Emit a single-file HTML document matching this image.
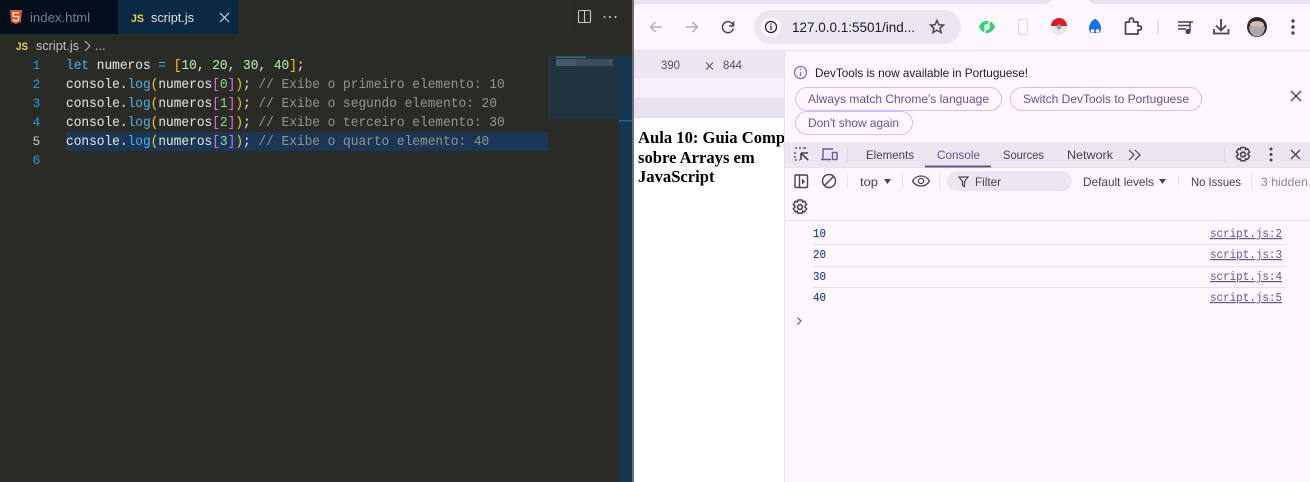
<!DOCTYPE html>
<html><head><meta charset="utf-8"><style>
html,body{margin:0;padding:0;width:1310px;height:482px;overflow:hidden;background:#fff}
svg{display:block}
.m{font-family:"Liberation Mono",monospace;font-size:13.8px}
.s{font-family:"Liberation Sans",sans-serif}
.w{fill:#dedfd9;stroke:#dedfd9;stroke-width:.08}.b{fill:#4fa8e8;stroke:#4fa8e8;stroke-width:.08}.n{fill:#b5e8a8;stroke:#b5e8a8;stroke-width:.08}.y{fill:#f2c40f;stroke:#f2c40f;stroke-width:.08}.p{fill:#d86fd8;stroke:#d86fd8;stroke-width:.08}.c{fill:#90908a;stroke:#90908a;stroke-width:.08}.g{fill:#7fd88f;stroke:#7fd88f;stroke-width:.08}
.t{font-family:"Liberation Sans",sans-serif;font-size:12px;fill:#45424c}
.pu{font-family:"Liberation Sans",sans-serif;font-size:12px;fill:#65558f}
.cm{font-family:"Liberation Mono",monospace;font-size:12px;fill:#1a3fb0;stroke:#1a3fb0;stroke-width:.15}
.ln{font-family:"Liberation Mono",monospace;font-size:12px;fill:#65558f;text-decoration:underline}
</style></head><body>
<svg width="1310" height="482" viewBox="0 0 1310 482" xmlns="http://www.w3.org/2000/svg">
<!-- VS Code -->
<rect width="633" height="482" fill="#2a2b24"/>
<rect width="118" height="34" fill="#010e1c"/>
<rect x="118" width="120" height="34" fill="#0b2942"/>
<rect x="568" y="0" width="1" height="34" fill="#1f3238"/>
<rect x="0" y="54.500" width="633" height="1" fill="#1f3238"/>
<path d="M10 10h12l-1.100 12-4.900 2-4.900-2z" fill="#e5532d"/>
<path d="M19 12.800h-6l.3 3.700h5.400l-.4 3.800-2.300.8-2.300-.8-.1-1.300" fill="none" stroke="#fff" stroke-width="1.200"/>
<text x="30" y="22" class="s" font-size="13" fill="#6d8296" textLength="60" lengthAdjust="spacingAndGlyphs">index.html</text>
<text x="131" y="22" class="s" font-size="11" font-weight="700" fill="#e8d44d" textLength="13" lengthAdjust="spacingAndGlyphs">JS</text>
<text x="151" y="22" class="s" font-size="13" fill="#dfe3e6" textLength="43" lengthAdjust="spacingAndGlyphs">script.js</text>
<path d="M220 13l9 9M229 13l-9 9" stroke="#cdd3d8" stroke-width="1.200"/>
<text x="16" y="50" class="s" font-size="11" font-weight="700" fill="#e8d44d" textLength="12" lengthAdjust="spacingAndGlyphs">JS</text>
<text x="36" y="50" class="s" font-size="12.500" fill="#c0c2bd" textLength="43" lengthAdjust="spacingAndGlyphs">script.js</text>
<path d="M85 41l5 5-5 5" fill="none" stroke="#c0c2bd" stroke-width="1"/>
<text x="95" y="50" class="s" font-size="12.500" fill="#c0c2bd">...</text>
<!-- actions -->
<rect x="578.500" y="10.500" width="12" height="12" rx="1" fill="none" stroke="#c9c9c4" stroke-width="1.100"/>
<path d="M584.500 10v13" stroke="#c9c9c4" stroke-width="1.100"/>
<circle cx="604.500" cy="17" r="1" fill="#c9c9c4"/><circle cx="610" cy="17" r="1" fill="#c9c9c4"/><circle cx="615.500" cy="17" r="1" fill="#c9c9c4"/>
<!-- minimap -->
<rect x="548" y="56" width="71" height="63" fill="#20333f"/>
<rect x="619" y="56" width="13" height="426" fill="#153650"/>
<rect x="619" y="120" width="13" height="1.500" fill="#1a6a9a"/>
<rect x="556" y="56.500" width="30" height="1.500" fill="#3f6f7c"/>
<rect x="556" y="59" width="57" height="7" fill="#3f4f5a"/>
<rect x="556" y="59" width="20" height="7" fill="#465c70"/>
<!-- highlight -->
<rect x="66" y="132" width="482" height="19" fill="#1a3654"/>
<!-- line nums -->
<g class="m" fill="#1e9ed8" style="font-size:13px">
<text x="32.500" y="69">1</text>
<text x="32.500" y="88">2</text>
<text x="32.500" y="107">3</text>
<text x="32.500" y="126">4</text>
<text x="32.500" y="145" fill="#c9ccc7">5</text>
<text x="32.500" y="164">6</text>
</g>
<!-- code -->
<g transform="translate(66 0) scale(.93 1)">
<text x="0" y="69" class="m"><tspan class="b">let</tspan><tspan class="w"> numeros </tspan><tspan class="b">=</tspan><tspan class="w"> </tspan><tspan class="y">[</tspan><tspan class="n">10</tspan><tspan class="w">, </tspan><tspan class="n">20</tspan><tspan class="w">, </tspan><tspan class="n">30</tspan><tspan class="w">, </tspan><tspan class="n">40</tspan><tspan class="y">]</tspan><tspan class="w">;</tspan></text>
<text x="0" y="88" class="m"><tspan class="w">console.</tspan><tspan class="b">log</tspan><tspan class="y">(</tspan><tspan class="w">numeros</tspan><tspan class="p">[</tspan><tspan class="g">0</tspan><tspan class="p">]</tspan><tspan class="y">)</tspan><tspan class="w">;</tspan><tspan class="c"> // Exibe o primeiro elemento: 10</tspan></text>
<text x="0" y="107" class="m"><tspan class="w">console.</tspan><tspan class="b">log</tspan><tspan class="y">(</tspan><tspan class="w">numeros</tspan><tspan class="p">[</tspan><tspan class="g">1</tspan><tspan class="p">]</tspan><tspan class="y">)</tspan><tspan class="w">;</tspan><tspan class="c"> // Exibe o segundo elemento: 20</tspan></text>
<text x="0" y="126" class="m"><tspan class="w">console.</tspan><tspan class="b">log</tspan><tspan class="y">(</tspan><tspan class="w">numeros</tspan><tspan class="p">[</tspan><tspan class="g">2</tspan><tspan class="p">]</tspan><tspan class="y">)</tspan><tspan class="w">;</tspan><tspan class="c"> // Exibe o terceiro elemento: 30</tspan></text>
<text x="0" y="145" class="m"><tspan class="w">console.</tspan><tspan class="b">log</tspan><tspan class="y">(</tspan><tspan class="w">numeros</tspan><tspan class="p">[</tspan><tspan class="g">3</tspan><tspan class="p">]</tspan><tspan class="y">)</tspan><tspan class="w">;</tspan><tspan class="c"> // Exibe o quarto elemento: 40</tspan></text>
</g>
<!-- divider -->
<rect x="632" width="2" height="482" fill="#6e6e6e"/>
<!-- Chrome frame -->
<rect x="634" width="676" height="482" fill="#e9e0f6"/>
<path d="M634 10a6 6 0 0 1 6-6H1310V51H634z" fill="#fdf7ff"/>
<path d="M1045 4c4 0 5-4 9-4h32c4 0 5 4 9 4z" fill="#fdf7ff"/>
<rect x="634" y="50" width="676" height="1" fill="#e4e0e8"/>
<path d="M662 27h-11.500M655.500 22L650.500 27l5 5" fill="none" stroke="#b3aeb8" stroke-width="1.500"/>
<path d="M686 27h11.500M692.500 22L697.500 27l-5 5" fill="none" stroke="#b3aeb8" stroke-width="1.500"/>
<path d="M733 25a5.500 5.500 0 1 0 .3 3.500M733.500 21.500v4.500h-4.500" fill="none" stroke="#49454f" stroke-width="1.500"/>
<rect x="754" y="10" width="207" height="34" rx="17" fill="#ece6f0"/>
<circle cx="771" cy="27" r="10" fill="#fdf7ff"/>
<circle cx="771" cy="27" r="5.500" fill="none" stroke="#1d1b20" stroke-width="1.200"/><path d="M771 26v4M771 23.500v1.300" stroke="#1d1b20" stroke-width="1.200"/>
<text x="792" y="32" class="s" font-size="14" fill="#1d1b20" textLength="123" lengthAdjust="spacingAndGlyphs">127.0.0.1:5501/ind...</text>
<path d="M937 20.500l1.900 4.200 4.600.4-3.500 3 1.100 4.500-4.100-2.400-4.100 2.400 1.100-4.500-3.500-3 4.600-.4z" fill="none" stroke="#49454f" stroke-width="1.500"/>
<!-- extensions -->
<path d="M979 27c2-5 5-6 8-6s6 1 8 6c-2 4-5 6-8 6s-6-2-8-6z" fill="#2fd46b"/><ellipse cx="987" cy="27" rx="3" ry="3" fill="#fdf7ff"/><path d="M984 33l6-12" stroke="#fdf7ff" stroke-width="1.500"/>
<rect x="1018.500" y="19.500" width="9" height="15" rx="1" fill="#fdf7ff" stroke="#e2e0e2" stroke-width="1.400"/>
<circle cx="1059" cy="27" r="8" fill="#e5e9e8"/><path d="M1051 26a8 8 0 0 1 16 0z" fill="#e01a22"/><circle cx="1059" cy="27" r="2.500" fill="#9aa5a5"/>
<path d="M1095 19c2 0 6 5 6 9 0 2-1 5-2 5h-8c-1 0-2-3-2-5 0-4 4-9 6-9z" fill="#1a6ff0"/><circle cx="1092.500" cy="31" r="1.800" fill="#fff"/><circle cx="1097.500" cy="31" r="1.800" fill="#fff"/>
<path d="M1125.500 22h4v-2a2 2 0 0 1 4 0v2h4.500v4h1.500a2 2 0 0 1 0 4h-1.500v4h-12.500v-4" fill="none" stroke="#49454f" stroke-width="1.700"/>
<path d="M1125.500 22v8" stroke="#49454f" stroke-width="1.700"/>
<rect x="1157" y="19" width="2" height="16" fill="#e6dcf4"/>
<path d="M1178 22h12M1178 25.500h12M1178 29h8" stroke="#49454f" stroke-width="1.500"/>
<circle cx="1188" cy="31.500" r="2.600" fill="#49454f"/><path d="M1190 31v-9h3" fill="none" stroke="#49454f" stroke-width="1.500"/>
<path d="M1221 19v11M1216 25.500l5 5 5-5" fill="none" stroke="#49454f" stroke-width="1.800"/><path d="M1214 29v4.500h14.500V29" fill="none" stroke="#49454f" stroke-width="1.800"/>
<circle cx="1257" cy="27" r="10" fill="#2c2a28"/><ellipse cx="1257" cy="25" rx="7" ry="4" fill="#d8bca8"/><path d="M1249 26.500h16c0 6-3.500 10-8 10s-8-4-8-10z" fill="#a8a8aa"/>
<circle cx="1293" cy="21" r="1.700" fill="#49454f"/><circle cx="1293" cy="27" r="1.700" fill="#49454f"/><circle cx="1293" cy="33" r="1.700" fill="#49454f"/>
<!-- page pane -->
<rect x="634" y="51" width="151" height="431" fill="#fff"/>
<rect x="634" y="51" width="151" height="27" fill="#ebe6f1"/>
<rect x="634" y="78" width="151" height="19" fill="#f6f1fb"/>
<rect x="634" y="97" width="151" height="20" fill="#e8e3ee"/>
<rect x="634" y="117" width="151" height="1" fill="#dcd8e0"/>
<text x="661" y="69" class="s" font-size="12" fill="#55515c" textLength="19" lengthAdjust="spacingAndGlyphs">390</text>
<path d="M706 62.500l7 7M713 62.500l-7 7" stroke="#55515c" stroke-width="1"/>
<text x="723" y="69" class="s" font-size="12" fill="#55515c" textLength="19" lengthAdjust="spacingAndGlyphs">844</text>
<svg x="634" y="118" width="151" height="80">
<text x="4" y="25" font-family="Liberation Serif,serif" font-size="16.600" font-weight="700" fill="#000">Aula 10: Guia Completo</text>
<text x="4" y="45" font-family="Liberation Serif,serif" font-size="16.600" font-weight="700" fill="#000">sobre Arrays em</text>
<text x="4" y="64" font-family="Liberation Serif,serif" font-size="16.600" font-weight="700" fill="#000">JavaScript</text>
</svg>
<!-- Devtools -->
<rect x="785" y="51" width="525" height="431" fill="#fef7ff"/>
<rect x="784" y="51" width="1" height="431" fill="#e8def8"/>
<circle cx="800.500" cy="72.500" r="6" fill="none" stroke="#8c6db5" stroke-width="1.300"/><path d="M800.500 72v4M800.500 68.800v1.400" stroke="#8c6db5" stroke-width="1.300"/>
<text x="815" y="77" class="t" textLength="213" lengthAdjust="spacingAndGlyphs" style="fill:#1d1b20">DevTools is now available in Portuguese!</text>
<rect x="795.500" y="87.500" width="206" height="23" rx="11.500" fill="none" stroke="#d0bcff"/>
<text x="808" y="103" class="pu" textLength="181" lengthAdjust="spacingAndGlyphs">Always match Chrome's language</text>
<rect x="1010.500" y="87.500" width="191" height="23" rx="11.500" fill="none" stroke="#d0bcff"/>
<text x="1023" y="103" class="pu" textLength="166" lengthAdjust="spacingAndGlyphs">Switch DevTools to Portuguese</text>
<rect x="795.500" y="111.500" width="117" height="23" rx="11.500" fill="none" stroke="#d0bcff"/>
<text x="808" y="127" class="pu" textLength="91" lengthAdjust="spacingAndGlyphs">Don't show again</text>
<path d="M1291 91l10 10M1301 91l-10 10" stroke="#49454f" stroke-width="1.400"/>
<!-- tabs bar -->
<rect x="785" y="142" width="525" height="25" fill="#ece6f0"/>
<rect x="785" y="167" width="525" height="1" fill="#e8def8"/>
<path d="M795 148h2M799 148h2M803 148h3M795 152v2M795 156v2M795 160h2M799 160h1" stroke="#49454f" stroke-width="1.300" fill="none"/><path d="M801 153h7M801 153v7M801 153l7 7" stroke="#49454f" stroke-width="1.600" fill="none"/>
<path d="M823 159v-10h10M821 159.500h10" fill="none" stroke="#6f55a8" stroke-width="1.400"/><rect x="832.500" y="152.500" width="4.500" height="7" fill="none" stroke="#6f55a8" stroke-width="1.400"/>
<rect x="847" y="147" width="1" height="15" fill="#e0d8ea"/>
<text x="866" y="159" class="t" textLength="48" lengthAdjust="spacingAndGlyphs">Elements</text>
<text x="937" y="159" class="pu" textLength="43" lengthAdjust="spacingAndGlyphs">Console</text>
<rect x="925" y="165.500" width="66" height="2" fill="#65558f"/>
<text x="1003" y="159" class="t" textLength="41" lengthAdjust="spacingAndGlyphs">Sources</text>
<text x="1067" y="159" class="t" textLength="46" lengthAdjust="spacingAndGlyphs">Network</text>
<path d="M1129 150l5 5-5 5M1135 150l5 5-5 5" fill="none" stroke="#49454f" stroke-width="1.200"/>
<rect x="1224" y="147" width="1" height="15" fill="#e0d8ea"/>
<g fill="none" stroke="#49454f"><circle cx="1243" cy="154.500" r="2.400" stroke-width="1.700"/><path d="M1241 147.500h4l.6 2 2-.8 2 3.400-1.600 1.400v1.200l1.600 1.400-2 3.400-2-.8-.6 2h-4l-.6-2-2 .8-2-3.400 1.600-1.400v-1.200l-1.600-1.400 2-3.400 2 .8z" stroke-width="1.500"/></g>
<circle cx="1271" cy="149" r="1.500" fill="#49454f"/><circle cx="1271" cy="154.500" r="1.500" fill="#49454f"/><circle cx="1271" cy="160" r="1.500" fill="#49454f"/>
<path d="M1291 150l9 9M1300 150l-9 9" stroke="#49454f" stroke-width="1.400"/>
<!-- console toolbar -->
<rect x="795" y="175" width="12.500" height="12.500" rx="1" fill="none" stroke="#49454f" stroke-width="1.400"/><path d="M799.500 175v12" stroke="#49454f" stroke-width="1.400"/><path d="M802 178.500l3 3-3 3z" fill="#49454f"/>
<circle cx="829" cy="181" r="6.500" fill="none" stroke="#49454f" stroke-width="1.400"/><path d="M824.500 185.500l9-9" stroke="#49454f" stroke-width="1.400"/>
<rect x="847" y="173" width="1" height="16" fill="#e8def8"/>
<text x="860" y="186" class="t" textLength="18" lengthAdjust="spacingAndGlyphs">top</text>
<path d="M884 179h7l-3.500 5z" fill="#49454f"/>
<rect x="902" y="173" width="1" height="16" fill="#e8def8"/>
<path d="M912.500 181c2-3.500 5-5 8.500-5s6.500 1.500 8.500 5c-2 3.500-5 5-8.500 5s-6.500-1.500-8.500-5z" fill="none" stroke="#49454f" stroke-width="1.300"/><circle cx="921" cy="181" r="2.600" fill="none" stroke="#49454f" stroke-width="1.300"/>
<rect x="939" y="173" width="1" height="16" fill="#e8def8"/>
<rect x="947" y="171" width="125" height="20" rx="10" fill="#ece6f0"/>
<path d="M959 177h9l-3.500 4.500v5l-2-1v-4z" fill="none" stroke="#49454f" stroke-width="1.200"/>
<text x="975" y="186" class="t" textLength="26" lengthAdjust="spacingAndGlyphs">Filter</text>
<text x="1083" y="186" class="t" textLength="71" lengthAdjust="spacingAndGlyphs">Default levels</text>
<path d="M1159 179h7l-3.500 5z" fill="#49454f"/>
<rect x="1178" y="173" width="1" height="16" fill="#e8def8"/>
<text x="1191" y="186" class="t" textLength="50" lengthAdjust="spacingAndGlyphs">No Issues</text>
<rect x="1251" y="173" width="1" height="16" fill="#e8def8"/>
<text x="1261" y="186" class="t" style="fill:#8a8690" textLength="47" lengthAdjust="spacingAndGlyphs">3 hidden</text>
<g fill="none" stroke="#49454f"><circle cx="800" cy="207" r="2.400" stroke-width="1.700"/><path d="M798 200h4l.6 2 2-.8 2 3.400-1.600 1.400v1.200l1.600 1.400-2 3.400-2-.8-.6 2h-4l-.6-2-2 .8-2-3.400 1.600-1.400v-1.200l-1.600-1.400 2-3.400 2 .8z" stroke-width="1.500"/></g>
<rect x="785" y="220" width="525" height="1" fill="#e8def8"/>
<!-- console lines -->
<text x="813" y="237" class="cm" textLength="13" lengthAdjust="spacingAndGlyphs">10</text><text x="1210" y="237" class="ln" textLength="72" lengthAdjust="spacingAndGlyphs">script.js:2</text>
<rect x="813" y="244" width="473" height="1" fill="#e8def8"/>
<text x="813" y="258" class="cm" textLength="13" lengthAdjust="spacingAndGlyphs">20</text><text x="1210" y="258" class="ln" textLength="72" lengthAdjust="spacingAndGlyphs">script.js:3</text>
<rect x="813" y="266" width="473" height="1" fill="#e8def8"/>
<text x="813" y="280" class="cm" textLength="13" lengthAdjust="spacingAndGlyphs">30</text><text x="1210" y="280" class="ln" textLength="72" lengthAdjust="spacingAndGlyphs">script.js:4</text>
<rect x="813" y="287" width="473" height="1" fill="#e8def8"/>
<text x="813" y="301" class="cm" textLength="13" lengthAdjust="spacingAndGlyphs">40</text><text x="1210" y="301" class="ln" textLength="72" lengthAdjust="spacingAndGlyphs">script.js:5</text>
<path d="M797.500 317.500l3.500 3.500-3.500 3.500" fill="none" stroke="#7a5fb0" stroke-width="1.300"/>
</svg>
</body></html>
